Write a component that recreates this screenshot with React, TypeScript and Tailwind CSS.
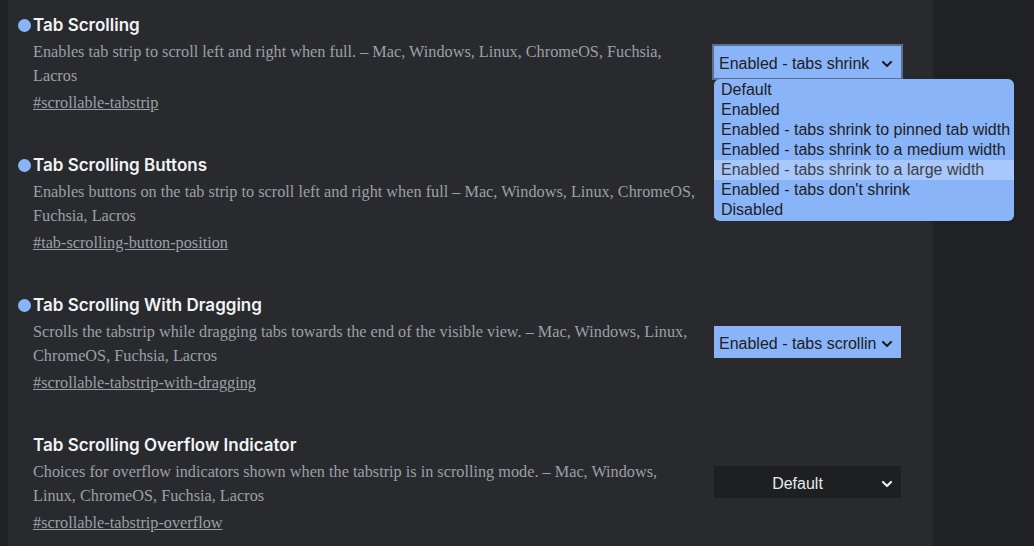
import { ChevronDown } from "lucide-react";

interface Flag {
  title: string;
  desc: string;
  link: string;
  value: string;
  modified: boolean;
  focused?: boolean;
}

const flags: Flag[] = [
  {
    title: "Tab Scrolling",
    desc: "Enables tab strip to scroll left and right when full. – Mac, Windows, Linux, ChromeOS, Fuchsia, Lacros",
    link: "#scrollable-tabstrip",
    value: "Enabled - tabs shrink to a large width",
    modified: true,
    focused: true,
  },
  {
    title: "Tab Scrolling Buttons",
    desc: "Enables buttons on the tab strip to scroll left and right when full – Mac, Windows, Linux, ChromeOS, Fuchsia, Lacros",
    link: "#tab-scrolling-button-position",
    value: "Enabled",
    modified: true,
  },
  {
    title: "Tab Scrolling With Dragging",
    desc: "Scrolls the tabstrip while dragging tabs towards the end of the visible view. – Mac, Windows, Linux, ChromeOS, Fuchsia, Lacros",
    link: "#scrollable-tabstrip-with-dragging",
    value: "Enabled - tabs scrolling",
    modified: true,
  },
  {
    title: "Tab Scrolling Overflow Indicator",
    desc: "Choices for overflow indicators shown when the tabstrip is in scrolling mode. – Mac, Windows, Linux, ChromeOS, Fuchsia, Lacros",
    link: "#scrollable-tabstrip-overflow",
    value: "Default",
    modified: false,
  },
];

const options = [
  "Default",
  "Enabled",
  "Enabled - tabs shrink to pinned tab width",
  "Enabled - tabs shrink to a medium width",
  "Enabled - tabs shrink to a large width",
  "Enabled - tabs don't shrink",
  "Disabled",
];

function Select({ flag }: { flag: Flag }) {
  const label = flag.focused ? "Enabled - tabs shrink" : flag.value;
  return (
    <div className="relative mt-[6px] shrink-0">
      <div
        className={
          flag.modified
            ? "flex h-[32px] w-[187px] items-center overflow-hidden bg-[#8ab4f8] pl-[5px] pr-[6px] pt-[3px] text-[#202124]" +
              (flag.focused ? " outline-2 outline-[#5c6f91]" : "")
            : "flex h-[32px] w-[187px] items-center overflow-hidden bg-[#1e1f21] pl-[5px] pr-[6px] pt-[3px] text-[#e8eaed]"
        }
        style={{ fontFamily: "'Liberation Sans', Arial, sans-serif" }}
      >
        <span
          className={
            flag.modified
              ? "flex-1 overflow-hidden whitespace-nowrap text-left text-[16px]"
              : "flex-1 overflow-hidden whitespace-nowrap text-center text-[16px]"
          }
        >
          {label}
        </span>
        <ChevronDown size={16} strokeWidth={3.2} className="ml-[3px] shrink-0" />
      </div>
      {flag.focused && (
        <div
          className="absolute left-0 top-[33px] z-10 w-[300px] rounded-[6px] bg-[#8ab4f8] py-px text-[16px] text-[#202124]"
          style={{ fontFamily: "'Liberation Sans', Arial, sans-serif" }}
        >
          {options.map((o) => (
            <div
              key={o}
              className={
                o === flag.value
                  ? "h-[20px] whitespace-nowrap bg-[#a8c7fa] pl-[7px] leading-[19px] text-[#3c4043]"
                  : "h-[20px] whitespace-nowrap pl-[7px] leading-[19px]"
              }
            >
              {o}
            </div>
          ))}
        </div>
      )}
    </div>
  );
}

export default function App() {
  return (
    <div className="flex h-[546px] w-[1034px] overflow-hidden bg-[#202124]">
      <div className="w-[8px] shrink-0 bg-[#202124]" />
      <main className="w-[925px] shrink-0 bg-[#292a2d] pl-[25px]">
        {flags.map((f) => (
          <section key={f.link} className="h-[140px] pt-[15px]">
            <h2
              className="relative h-[20px] text-[17px] font-semibold leading-[20px] text-[#f1f3f4]"
              style={{ fontFamily: "Inter, 'Noto Sans', sans-serif" }}
            >
              {f.modified && (
                <span className="absolute -left-[15px] top-[4px] h-[13px] w-[13px] rounded-full bg-[#8ab4f8]" />
              )}
              {f.title}
            </h2>
            <div className="mt-[5px] flex gap-[13px]">
              <div
                className="w-[668px] shrink-0 text-[16.25px] text-[#9aa0a6]"
                style={{ fontFamily: "'Liberation Serif', 'Times New Roman', serif" }}
              >
                <p className="leading-[24px]">{f.desc}</p>
                <a className="mt-[3px] block leading-[24px] underline">{f.link}</a>
              </div>
              <Select flag={f} />
            </div>
          </section>
        ))}
      </main>
    </div>
  );
}
